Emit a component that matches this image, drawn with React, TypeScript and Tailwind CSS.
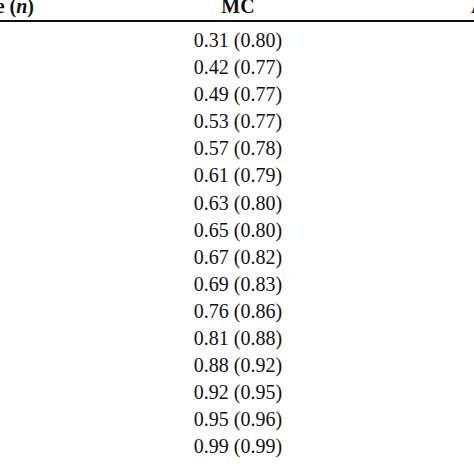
import React from "react";

const rows = [
  "0.31 (0.80)",
  "0.42 (0.77)",
  "0.49 (0.77)",
  "0.53 (0.77)",
  "0.57 (0.78)",
  "0.61 (0.79)",
  "0.63 (0.80)",
  "0.65 (0.80)",
  "0.67 (0.82)",
  "0.69 (0.83)",
  "0.76 (0.86)",
  "0.81 (0.88)",
  "0.88 (0.92)",
  "0.92 (0.95)",
  "0.95 (0.96)",
  "0.99 (0.99)",
];

export default function App() {
  return (
    <div
      className="w-[474px] h-[474px] overflow-hidden bg-white text-[#111]"
      style={{ fontFamily: '"Liberation Serif", "Times New Roman", serif' }}
    >
      <div className="mt-[-4px] pb-[4px] border-b-2 border-[#111] grid grid-cols-[34px_408px_32px] text-[20px] leading-[20px] font-bold">
        <div className="flex justify-end whitespace-nowrap">
          <span>
            Sample size (<i>n</i>)
          </span>
        </div>
        <div className="text-center">MC</div>
        <div className="pl-[29px] whitespace-nowrap">AUC</div>
      </div>
      <div className="pt-[5px] pl-[2px] text-center text-[20px] leading-[27.1px]">
        {rows.map((r) => (
          <div key={r}>{r}</div>
        ))}
      </div>
    </div>
  );
}
